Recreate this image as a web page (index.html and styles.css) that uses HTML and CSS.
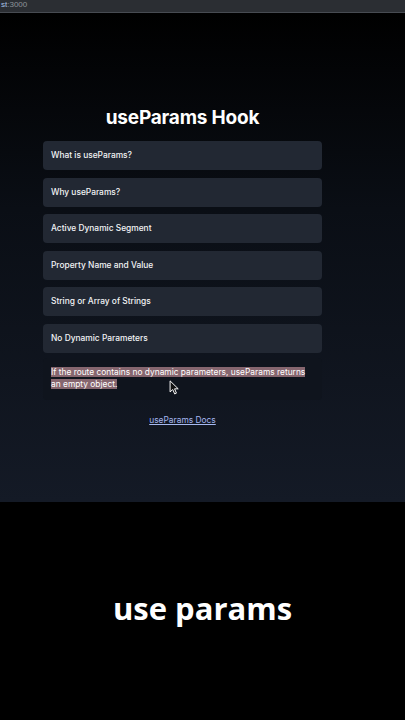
FILE: index.html
```html
<!DOCTYPE html>
<html>
<head>
<meta charset="utf-8">
<link rel="stylesheet" href="styles.css">
</head>
<body>
<div class="urlbar"><span class="host">st</span><span class="port">:3000</span></div>
<div class="screen">
  <h1 class="title">useParams Hook</h1>
  <div class="list">
    <div class="card">What is useParams?</div>
    <div class="card">Why useParams?</div>
    <div class="card">Active Dynamic Segment</div>
    <div class="card">Property Name and Value</div>
    <div class="card">String or Array of Strings</div>
    <div class="card">No Dynamic Parameters</div>
    <div class="answer"><span class="sel">If the route contains no dynamic parameters, useParams returns an empty object.</span></div>
  </div>
  <a class="docs" href="#">useParams Docs</a>
  <svg class="cursor" width="11" height="15" viewBox="0 0 12 17"><path d="M1 1 L1 13.5 L4 10.8 L6.2 15.8 L8.2 14.9 L6.1 10 L10.2 10 Z" fill="#111" stroke="#fff" stroke-width="1.1" stroke-linejoin="round"/></svg>
</div>
<div class="caption">use params</div>
</body>
</html>
```
FILE: styles.css
```css
html, body { margin: 0; padding: 0; }
body {
  width: 405px;
  height: 720px;
  background: #000;
  font-family: Inter, "Noto Sans", sans-serif;
  overflow: hidden;
}
.urlbar {
  height: 12px;
  background: #2b2e33;
  border-bottom: 1px solid #474b52;
  font-family: "Liberation Sans", sans-serif;
  font-size: 8px;
  line-height: 9px;
  padding-left: 1px;
  overflow: hidden;
}
.urlbar .host { color: #a9c3e8; }
.urlbar .port { color: #8d9299; }
.screen {
  position: relative;
  height: 489px;
  background: linear-gradient(180deg, #000 0%, #0a0e15 40%, #141a26 100%);
  display: flex;
  flex-direction: column;
  align-items: flex-start;
  padding-left: 43px;
  box-sizing: border-box;
  padding-top: 93px;
}
.title {
  width: 279px;
  margin: 0 0 11px 0;
  text-align: center;
  color: #fff;
  font-size: 19px;
  line-height: 24px;
  font-weight: 700;
  letter-spacing: -0.2px;
}
.list {
  width: 279px;
  display: flex;
  flex-direction: column;
  gap: 7.6px;
}
.card {
  height: 29px;
  background: #222833;
  border-radius: 4px;
  color: #f3f4f6;
  font-size: 8.4px;
  line-height: 29px;
  padding-left: 8px;
  font-weight: 500;
}
.answer {
  margin-top: -3px;
  background: #0f141d;
  border-radius: 4px;
  padding: 8px 14px 9px 8px;
  color: #fff;
  font-size: 8.4px;
  line-height: 12.6px;
}
.sel { background: #86666f; }
.docs {
  width: 279px;
  margin-top: 14px;
  text-align: center;
  color: #a6b8f0;
  font-size: 8.4px;
  line-height: 12px;
}
.cursor {
  position: absolute;
  left: 169px;
  top: 367px;
}
.caption {
  height: 218px;
  display: flex;
  align-items: center;
  justify-content: center;
  color: #fff;
  font-family: "Open Sans", sans-serif;
  font-weight: 700;
  font-size: 31px;
  padding-bottom: 6px;
  box-sizing: border-box;
}
```
